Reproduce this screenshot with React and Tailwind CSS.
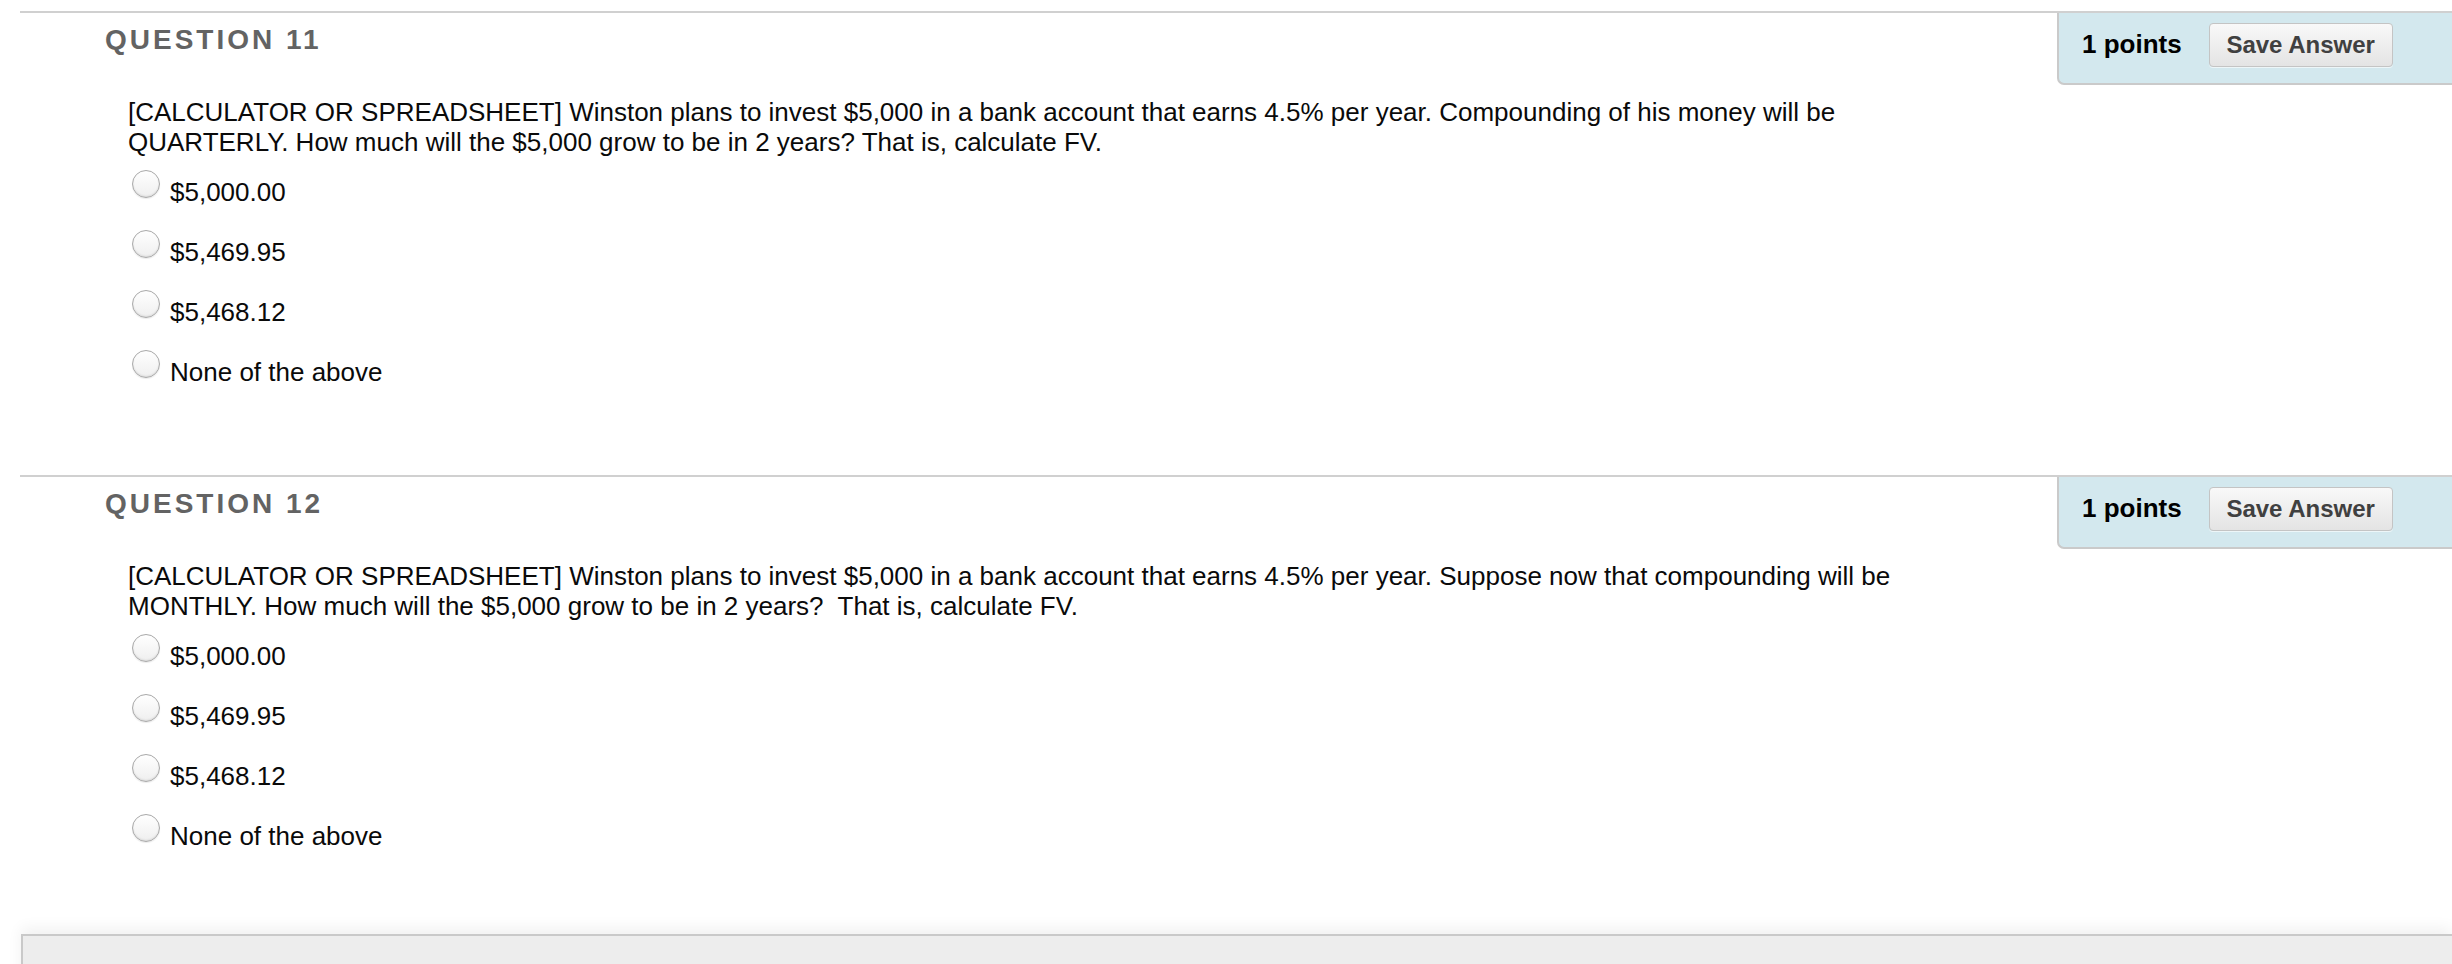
import React from "react";

const FONT = { fontFamily: '"Liberation Sans", Arial, Helvetica, sans-serif' };

function Radio() {
  return (
    <span className="mt-[-7px] block h-[28px] w-[28px] shrink-0 rounded-full border border-[#a9a9a9] bg-gradient-to-b from-white to-[#efefef] shadow-[inset_0_-1px_2px_rgba(0,0,0,0.1),0_1px_1px_rgba(0,0,0,0.08)]" />
  );
}

function PointsBox() {
  return (
    <div className="flex h-[72px] w-[395px] shrink-0 items-start rounded-bl-[7px] border-b-2 border-l-2 border-[#cacaca] bg-[#d3e8ee] pl-[23px] pt-[10px]">
      <span className="mt-[6px] text-[26px] font-bold leading-[30px] text-black">1 points</span>
      <button className="ml-[27px] flex h-[44px] w-[184px] items-center justify-center rounded-[4px] border border-[#c4c4c4] bg-gradient-to-b from-[#f9f9f9] to-[#e4e4e4] text-[24px] font-bold leading-[30px] text-[#404040] shadow-[0_1px_0_rgba(255,255,255,0.6)]">
        Save Answer
      </button>
    </div>
  );
}

function Question({ number, line1, line2, options, heightClass }) {
  return (
    <section className={`ml-[20px] border-t-2 border-[#d0d0d0] ${heightClass}`}>
      <div className="flex items-start justify-between">
        <h2 className="pl-[85px] pt-[12px] text-[28px] font-bold leading-[30px] tracking-[3px] text-[#636363]">
          QUESTION {number}
        </h2>
        <PointsBox />
      </div>
      <p className="mt-[12px] whitespace-nowrap pl-[108px] text-[26px] leading-[30px] text-[#0a0a0a]">
        {line1}
        <br />
        {line2}
      </p>
      <div className="mt-[20px] flex flex-col gap-[30px] pl-[112px]">
        {options.map((o) => (
          <label key={o} className="flex items-start gap-[10px] text-[26px] leading-[30px] text-[#0a0a0a]">
            <Radio />
            <span>{o}</span>
          </label>
        ))}
      </div>
    </section>
  );
}

const OPTIONS = ["$5,000.00", "$5,469.95", "$5,468.12", "None of the above"];

export default function App() {
  return (
    <div className="h-[964px] w-full overflow-hidden bg-white" style={FONT}>
      <div className="h-[11px]" />
      <Question
        number="11"
        heightClass="h-[464px]"
        line1="[CALCULATOR OR SPREADSHEET] Winston plans to invest $5,000 in a bank account that earns 4.5% per year. Compounding of his money will be"
        line2="QUARTERLY. How much will the $5,000 grow to be in 2 years? That is, calculate FV."
        options={OPTIONS}
      />
      <Question
        number="12"
        heightClass="h-[459px]"
        line1="[CALCULATOR OR SPREADSHEET] Winston plans to invest $5,000 in a bank account that earns 4.5% per year. Suppose now that compounding will be"
        line2={"MONTHLY. How much will the $5,000 grow to be in 2 years?\u00a0 That is, calculate FV."}
        options={OPTIONS}
      />
      <div className="ml-[21px] h-[60px] border-l-2 border-t-2 border-[#c9c9c9] bg-[#ededed] shadow-[0_-6px_14px_rgba(0,0,0,0.06)]" />
    </div>
  );
}
